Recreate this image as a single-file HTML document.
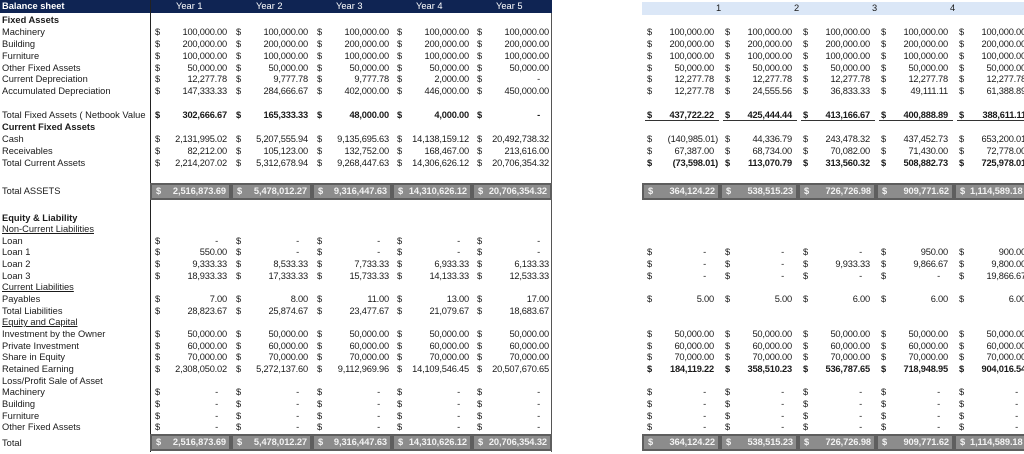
<!DOCTYPE html>
<html><head><meta charset="utf-8"><style>
*{margin:0;padding:0;box-sizing:border-box}
body{width:1024px;height:454px;overflow:hidden;background:#fff;font-family:"Liberation Sans",Arial,sans-serif;font-size:9.3px;color:#1a1a1a;position:relative}
.r{position:absolute;left:0;width:1024px;height:12px;line-height:12px}
.r p{position:absolute;left:2px;top:0;white-space:nowrap}
.c{position:absolute;top:0;height:12px;text-align:right;white-space:nowrap;letter-spacing:-0.2px}
.c i{font-style:normal;position:absolute;left:5px;top:0}
.L{width:81px;padding-right:4px}
.R{width:78px;padding-right:6px}
.c.z{padding-right:13px}.R.z{padding-right:14px}
.c.n{padding-right:2px}
.l1{left:150px}.l2{left:231px}.l3{left:312px}.l4{left:392px}.l5{left:472px}
.r1{left:642px}.r2{left:720px}.r3{left:798px}.r4{left:876px}.r5{left:954px}
.b{font-weight:bold}
.u p{text-decoration:underline}
#hd{position:absolute;left:0;top:0;width:552px;height:13px;background:#0f2453;color:#fff;font-weight:bold;line-height:13px}
#hd span{position:absolute;top:0}
#vl{position:absolute;left:150px;top:0;width:1px;height:452px;background:#222}
#vr{position:absolute;left:551px;top:13px;width:1px;height:439px;background:#555}
#rh{position:absolute;left:642px;top:2px;width:382px;height:13px;background:#dbe7f7}
#rh span{position:absolute;top:0;line-height:13px}
.bar{position:absolute;height:17px;background:#8c8c8c;border:2px solid #5e5e5e;color:#f2f2f2;font-weight:bold;line-height:13px;text-align:right;padding-right:3px;white-space:nowrap;letter-spacing:-0.1px}
.bar i{font-style:normal;position:absolute;left:4px}
.ul .R::after{content:"";position:absolute;left:3px;right:1px;bottom:0;height:1px;background:#333}
</style></head><body>
<div id="hd"><span style="left:2px">Balance sheet</span><span style="left:176px;font-weight:normal">Year 1</span><span style="left:256px;font-weight:normal">Year 2</span><span style="left:336px;font-weight:normal">Year 3</span><span style="left:416px;font-weight:normal">Year 4</span><span style="left:496px;font-weight:normal">Year 5</span></div>
<div id="vl"></div><div id="vr"></div>
<div id="rh"><span style="left:74px">1</span><span style="left:152px">2</span><span style="left:230px">3</span><span style="left:308px">4</span></div>

<div class="r b" style="top:14px"><p>Fixed Assets</p></div>
<div class="r" style="top:26px"><p>Machinery</p><span class="c L l1"><i>$</i>100,000.00</span><span class="c L l2"><i>$</i>100,000.00</span><span class="c L l3"><i>$</i>100,000.00</span><span class="c L l4"><i>$</i>100,000.00</span><span class="c L l5"><i>$</i>100,000.00</span><span class="c R r1"><i>$</i>100,000.00</span><span class="c R r2"><i>$</i>100,000.00</span><span class="c R r3"><i>$</i>100,000.00</span><span class="c R r4"><i>$</i>100,000.00</span><span class="c R r5"><i>$</i>100,000.00</span></div>
<div class="r" style="top:38px"><p>Building</p><span class="c L l1"><i>$</i>200,000.00</span><span class="c L l2"><i>$</i>200,000.00</span><span class="c L l3"><i>$</i>200,000.00</span><span class="c L l4"><i>$</i>200,000.00</span><span class="c L l5"><i>$</i>200,000.00</span><span class="c R r1"><i>$</i>200,000.00</span><span class="c R r2"><i>$</i>200,000.00</span><span class="c R r3"><i>$</i>200,000.00</span><span class="c R r4"><i>$</i>200,000.00</span><span class="c R r5"><i>$</i>200,000.00</span></div>
<div class="r" style="top:50px"><p>Furniture</p><span class="c L l1"><i>$</i>100,000.00</span><span class="c L l2"><i>$</i>100,000.00</span><span class="c L l3"><i>$</i>100,000.00</span><span class="c L l4"><i>$</i>100,000.00</span><span class="c L l5"><i>$</i>100,000.00</span><span class="c R r1"><i>$</i>100,000.00</span><span class="c R r2"><i>$</i>100,000.00</span><span class="c R r3"><i>$</i>100,000.00</span><span class="c R r4"><i>$</i>100,000.00</span><span class="c R r5"><i>$</i>100,000.00</span></div>
<div class="r" style="top:62px"><p>Other Fixed Assets</p><span class="c L l1"><i>$</i>50,000.00</span><span class="c L l2"><i>$</i>50,000.00</span><span class="c L l3"><i>$</i>50,000.00</span><span class="c L l4"><i>$</i>50,000.00</span><span class="c L l5"><i>$</i>50,000.00</span><span class="c R r1"><i>$</i>50,000.00</span><span class="c R r2"><i>$</i>50,000.00</span><span class="c R r3"><i>$</i>50,000.00</span><span class="c R r4"><i>$</i>50,000.00</span><span class="c R r5"><i>$</i>50,000.00</span></div>
<div class="r" style="top:73px"><p>Current Depreciation</p><span class="c L l1"><i>$</i>12,277.78</span><span class="c L l2"><i>$</i>9,777.78</span><span class="c L l3"><i>$</i>9,777.78</span><span class="c L l4"><i>$</i>2,000.00</span><span class="c L l5 z"><i>$</i>-</span><span class="c R r1"><i>$</i>12,277.78</span><span class="c R r2"><i>$</i>12,277.78</span><span class="c R r3"><i>$</i>12,277.78</span><span class="c R r4"><i>$</i>12,277.78</span><span class="c R r5"><i>$</i>12,277.78</span></div>
<div class="r" style="top:85px"><p>Accumulated Depreciation</p><span class="c L l1"><i>$</i>147,333.33</span><span class="c L l2"><i>$</i>284,666.67</span><span class="c L l3"><i>$</i>402,000.00</span><span class="c L l4"><i>$</i>446,000.00</span><span class="c L l5"><i>$</i>450,000.00</span><span class="c R r1"><i>$</i>12,277.78</span><span class="c R r2"><i>$</i>24,555.56</span><span class="c R r3"><i>$</i>36,833.33</span><span class="c R r4"><i>$</i>49,111.11</span><span class="c R r5"><i>$</i>61,388.89</span></div>
<div class="r b ul" style="top:109px"><p style="font-weight:normal">Total Fixed Assets ( Netbook Value</p><span class="c L l1"><i>$</i>302,666.67</span><span class="c L l2"><i>$</i>165,333.33</span><span class="c L l3"><i>$</i>48,000.00</span><span class="c L l4"><i>$</i>4,000.00</span><span class="c L l5 z"><i>$</i>-</span><span class="c R r1"><i>$</i>437,722.22</span><span class="c R r2"><i>$</i>425,444.44</span><span class="c R r3"><i>$</i>413,166.67</span><span class="c R r4"><i>$</i>400,888.89</span><span class="c R r5"><i>$</i>388,611.11</span></div>
<div class="r b" style="top:121px"><p>Current Fixed Assets</p></div>
<div class="r" style="top:133px"><p>Cash</p><span class="c L l1"><i>$</i>2,131,995.02</span><span class="c L l2"><i>$</i>5,207,555.94</span><span class="c L l3"><i>$</i>9,135,695.63</span><span class="c L l4"><i>$</i>14,138,159.12</span><span class="c L l5"><i>$</i>20,492,738.32</span><span class="c R r1 n"><i>$</i>(140,985.01)</span><span class="c R r2"><i>$</i>44,336.79</span><span class="c R r3"><i>$</i>243,478.32</span><span class="c R r4"><i>$</i>437,452.73</span><span class="c R r5"><i>$</i>653,200.01</span></div>
<div class="r" style="top:145px"><p>Receivables</p><span class="c L l1"><i>$</i>82,212.00</span><span class="c L l2"><i>$</i>105,123.00</span><span class="c L l3"><i>$</i>132,752.00</span><span class="c L l4"><i>$</i>168,467.00</span><span class="c L l5"><i>$</i>213,616.00</span><span class="c R r1"><i>$</i>67,387.00</span><span class="c R r2"><i>$</i>68,734.00</span><span class="c R r3"><i>$</i>70,082.00</span><span class="c R r4"><i>$</i>71,430.00</span><span class="c R r5"><i>$</i>72,778.00</span></div>
<div class="r" style="top:157px"><p>Total Current Assets</p><span class="c L l1"><i>$</i>2,214,207.02</span><span class="c L l2"><i>$</i>5,312,678.94</span><span class="c L l3"><i>$</i>9,268,447.63</span><span class="c L l4"><i>$</i>14,306,626.12</span><span class="c L l5"><i>$</i>20,706,354.32</span><span class="c R r1 n b"><i>$</i>(73,598.01)</span><span class="c R r2 b"><i>$</i>113,070.79</span><span class="c R r3 b"><i>$</i>313,560.32</span><span class="c R r4 b"><i>$</i>508,882.73</span><span class="c R r5 b"><i>$</i>725,978.01</span></div>

<div class="r" style="top:185px"><p>Total ASSETS</p></div>
<div class="bar" style="left:150px;top:183px;width:81px"><i>$</i>2,516,873.69</div>
<div class="bar" style="left:231px;top:183px;width:81px"><i>$</i>5,478,012.27</div>
<div class="bar" style="left:312px;top:183px;width:80px"><i>$</i>9,316,447.63</div>
<div class="bar" style="left:392px;top:183px;width:80px"><i>$</i>14,310,626.12</div>
<div class="bar" style="left:472px;top:183px;width:80px"><i>$</i>20,706,354.32</div>
<div class="bar" style="left:642px;top:183px;width:78px"><i>$</i>364,124.22</div>
<div class="bar" style="left:720px;top:183px;width:78px"><i>$</i>538,515.23</div>
<div class="bar" style="left:798px;top:183px;width:78px"><i>$</i>726,726.98</div>
<div class="bar" style="left:876px;top:183px;width:78px"><i>$</i>909,771.62</div>
<div class="bar" style="left:954px;top:183px;width:78px;text-align:left;padding-left:14px"><i>$</i>1,114,589.18</div>

<div class="r b" style="top:212px"><p>Equity &amp; Liability</p></div>
<div class="r u" style="top:223px"><p>Non-Current Liabilities </p></div>
<div class="r" style="top:235px"><p>Loan</p><span class="c L l1 z"><i>$</i>-</span><span class="c L l2 z"><i>$</i>-</span><span class="c L l3 z"><i>$</i>-</span><span class="c L l4 z"><i>$</i>-</span><span class="c L l5 z"><i>$</i>-</span></div>
<div class="r" style="top:246px"><p>Loan 1</p><span class="c L l1"><i>$</i>550.00</span><span class="c L l2 z"><i>$</i>-</span><span class="c L l3 z"><i>$</i>-</span><span class="c L l4 z"><i>$</i>-</span><span class="c L l5 z"><i>$</i>-</span><span class="c R r1 z"><i>$</i>-</span><span class="c R r2 z"><i>$</i>-</span><span class="c R r3 z"><i>$</i>-</span><span class="c R r4"><i>$</i>950.00</span><span class="c R r5"><i>$</i>900.00</span></div>
<div class="r" style="top:258px"><p>Loan 2</p><span class="c L l1"><i>$</i>9,333.33</span><span class="c L l2"><i>$</i>8,533.33</span><span class="c L l3"><i>$</i>7,733.33</span><span class="c L l4"><i>$</i>6,933.33</span><span class="c L l5"><i>$</i>6,133.33</span><span class="c R r1 z"><i>$</i>-</span><span class="c R r2 z"><i>$</i>-</span><span class="c R r3"><i>$</i>9,933.33</span><span class="c R r4"><i>$</i>9,866.67</span><span class="c R r5"><i>$</i>9,800.00</span></div>
<div class="r" style="top:270px"><p>Loan 3</p><span class="c L l1"><i>$</i>18,933.33</span><span class="c L l2"><i>$</i>17,333.33</span><span class="c L l3"><i>$</i>15,733.33</span><span class="c L l4"><i>$</i>14,133.33</span><span class="c L l5"><i>$</i>12,533.33</span><span class="c R r1 z"><i>$</i>-</span><span class="c R r2 z"><i>$</i>-</span><span class="c R r3 z"><i>$</i>-</span><span class="c R r4 z"><i>$</i>-</span><span class="c R r5"><i>$</i>19,866.67</span></div>
<div class="r u" style="top:281px"><p>Current Liabilities </p></div>
<div class="r" style="top:293px"><p>Payables</p><span class="c L l1"><i>$</i>7.00</span><span class="c L l2"><i>$</i>8.00</span><span class="c L l3"><i>$</i>11.00</span><span class="c L l4"><i>$</i>13.00</span><span class="c L l5"><i>$</i>17.00</span><span class="c R r1"><i>$</i>5.00</span><span class="c R r2"><i>$</i>5.00</span><span class="c R r3"><i>$</i>6.00</span><span class="c R r4"><i>$</i>6.00</span><span class="c R r5"><i>$</i>6.00</span></div>
<div class="r" style="top:305px"><p>Total Liabilities</p><span class="c L l1"><i>$</i>28,823.67</span><span class="c L l2"><i>$</i>25,874.67</span><span class="c L l3"><i>$</i>23,477.67</span><span class="c L l4"><i>$</i>21,079.67</span><span class="c L l5"><i>$</i>18,683.67</span></div>
<div class="r u" style="top:316px"><p>Equity and Capital </p></div>
<div class="r" style="top:328px"><p>Investment by the Owner</p><span class="c L l1"><i>$</i>50,000.00</span><span class="c L l2"><i>$</i>50,000.00</span><span class="c L l3"><i>$</i>50,000.00</span><span class="c L l4"><i>$</i>50,000.00</span><span class="c L l5"><i>$</i>50,000.00</span><span class="c R r1"><i>$</i>50,000.00</span><span class="c R r2"><i>$</i>50,000.00</span><span class="c R r3"><i>$</i>50,000.00</span><span class="c R r4"><i>$</i>50,000.00</span><span class="c R r5"><i>$</i>50,000.00</span></div>
<div class="r" style="top:340px"><p>Private Investment</p><span class="c L l1"><i>$</i>60,000.00</span><span class="c L l2"><i>$</i>60,000.00</span><span class="c L l3"><i>$</i>60,000.00</span><span class="c L l4"><i>$</i>60,000.00</span><span class="c L l5"><i>$</i>60,000.00</span><span class="c R r1"><i>$</i>60,000.00</span><span class="c R r2"><i>$</i>60,000.00</span><span class="c R r3"><i>$</i>60,000.00</span><span class="c R r4"><i>$</i>60,000.00</span><span class="c R r5"><i>$</i>60,000.00</span></div>
<div class="r" style="top:351px"><p>Share in Equity</p><span class="c L l1"><i>$</i>70,000.00</span><span class="c L l2"><i>$</i>70,000.00</span><span class="c L l3"><i>$</i>70,000.00</span><span class="c L l4"><i>$</i>70,000.00</span><span class="c L l5"><i>$</i>70,000.00</span><span class="c R r1"><i>$</i>70,000.00</span><span class="c R r2"><i>$</i>70,000.00</span><span class="c R r3"><i>$</i>70,000.00</span><span class="c R r4"><i>$</i>70,000.00</span><span class="c R r5"><i>$</i>70,000.00</span></div>
<div class="r" style="top:363px"><p>Retained Earning</p><span class="c L l1"><i>$</i>2,308,050.02</span><span class="c L l2"><i>$</i>5,272,137.60</span><span class="c L l3"><i>$</i>9,112,969.96</span><span class="c L l4"><i>$</i>14,109,546.45</span><span class="c L l5"><i>$</i>20,507,670.65</span><span class="c R r1 b"><i>$</i>184,119.22</span><span class="c R r2 b"><i>$</i>358,510.23</span><span class="c R r3 b"><i>$</i>536,787.65</span><span class="c R r4 b"><i>$</i>718,948.95</span><span class="c R r5 b"><i>$</i>904,016.54</span></div>
<div class="r" style="top:375px"><p>Loss/Profit Sale of Asset</p></div>
<div class="r" style="top:386px"><p>Machinery</p><span class="c L l1 z"><i>$</i>-</span><span class="c L l2 z"><i>$</i>-</span><span class="c L l3 z"><i>$</i>-</span><span class="c L l4 z"><i>$</i>-</span><span class="c L l5 z"><i>$</i>-</span><span class="c R r1 z"><i>$</i>-</span><span class="c R r2 z"><i>$</i>-</span><span class="c R r3 z"><i>$</i>-</span><span class="c R r4 z"><i>$</i>-</span><span class="c R r5 z"><i>$</i>-</span></div>
<div class="r" style="top:398px"><p>Building</p><span class="c L l1 z"><i>$</i>-</span><span class="c L l2 z"><i>$</i>-</span><span class="c L l3 z"><i>$</i>-</span><span class="c L l4 z"><i>$</i>-</span><span class="c L l5 z"><i>$</i>-</span><span class="c R r1 z"><i>$</i>-</span><span class="c R r2 z"><i>$</i>-</span><span class="c R r3 z"><i>$</i>-</span><span class="c R r4 z"><i>$</i>-</span><span class="c R r5 z"><i>$</i>-</span></div>
<div class="r" style="top:410px"><p>Furniture</p><span class="c L l1 z"><i>$</i>-</span><span class="c L l2 z"><i>$</i>-</span><span class="c L l3 z"><i>$</i>-</span><span class="c L l4 z"><i>$</i>-</span><span class="c L l5 z"><i>$</i>-</span><span class="c R r1 z"><i>$</i>-</span><span class="c R r2 z"><i>$</i>-</span><span class="c R r3 z"><i>$</i>-</span><span class="c R r4 z"><i>$</i>-</span><span class="c R r5 z"><i>$</i>-</span></div>
<div class="r" style="top:421px"><p>Other Fixed Assets</p><span class="c L l1 z"><i>$</i>-</span><span class="c L l2 z"><i>$</i>-</span><span class="c L l3 z"><i>$</i>-</span><span class="c L l4 z"><i>$</i>-</span><span class="c L l5 z"><i>$</i>-</span><span class="c R r1 z"><i>$</i>-</span><span class="c R r2 z"><i>$</i>-</span><span class="c R r3 z"><i>$</i>-</span><span class="c R r4 z"><i>$</i>-</span><span class="c R r5 z"><i>$</i>-</span></div>

<div class="r" style="top:437px"><p>Total</p></div>
<div class="bar" style="left:150px;top:434px;width:81px"><i>$</i>2,516,873.69</div>
<div class="bar" style="left:231px;top:434px;width:81px"><i>$</i>5,478,012.27</div>
<div class="bar" style="left:312px;top:434px;width:80px"><i>$</i>9,316,447.63</div>
<div class="bar" style="left:392px;top:434px;width:80px"><i>$</i>14,310,626.12</div>
<div class="bar" style="left:472px;top:434px;width:80px"><i>$</i>20,706,354.32</div>
<div class="bar" style="left:642px;top:434px;width:78px"><i>$</i>364,124.22</div>
<div class="bar" style="left:720px;top:434px;width:78px"><i>$</i>538,515.23</div>
<div class="bar" style="left:798px;top:434px;width:78px"><i>$</i>726,726.98</div>
<div class="bar" style="left:876px;top:434px;width:78px"><i>$</i>909,771.62</div>
<div class="bar" style="left:954px;top:434px;width:78px;text-align:left;padding-left:14px"><i>$</i>1,114,589.18</div>
</body></html>
